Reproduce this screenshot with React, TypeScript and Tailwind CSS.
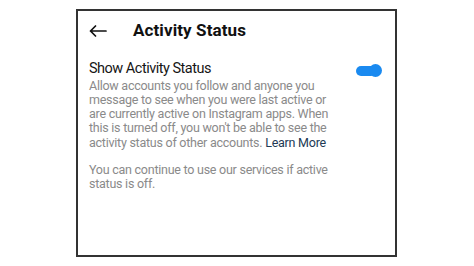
import React from "react";

export default function App() {
  return (
    <div className="h-[266px] w-[474px] bg-white font-['Roboto',sans-serif]">
      <div className="ml-[76px] pt-[9px]">
        <div className="flex h-[248px] w-[321px] flex-col border-2 border-[#333333] pl-[11px] pr-[12px]">
          <div className="flex h-[38px] items-center pt-[1px]">
            <svg width="18" height="12" viewBox="0 0 18 12" fill="none" className="shrink-0">
              <path
                d="M17 6H1.5M6.5 1L1.5 6L6.5 11"
                stroke="#111111"
                strokeWidth="1.7"
                strokeLinecap="round"
                strokeLinejoin="round"
              />
            </svg>
            <h1 className="ml-[26px] text-[17px] font-bold tracking-[0.1px] text-[#111111]">
              Activity Status
            </h1>
          </div>

          <div className="mt-[11px] flex items-start justify-between">
            <div className="w-[250px]">
              <p className="text-[14.5px] leading-[18px] tracking-[-0.5px] text-[#161616]">
                Show Activity Status
              </p>
              <p className="mt-[1px] text-[12.5px] leading-[14px] tracking-[-0.25px] text-[#8a8a8a]">
                <span className="block whitespace-nowrap">Allow accounts you follow and anyone you</span>
                <span className="block whitespace-nowrap">message to see when you were last active or</span>
                <span className="block whitespace-nowrap">are currently active on Instagram apps. When</span>
                <span className="block whitespace-nowrap">this is turned off, you won't be able to see the</span>
                <span className="mt-[1px] block whitespace-nowrap">
                  activity status of other accounts.{" "}
                  <span className="text-[#223a55]">Learn More</span>
                </span>
              </p>
              <p className="mt-[13px] text-[12.5px] leading-[14px] tracking-[-0.25px] text-[#8a8a8a]">
                <span className="block whitespace-nowrap">You can continue to use our services if active</span>
                <span className="block whitespace-nowrap">status is off.</span>
              </p>
            </div>

            <div className="relative mr-[1px] mt-[4px] h-[13px] w-[26px] shrink-0">
              <div className="absolute left-0 top-[2px] h-[10px] w-[20px] rounded-full bg-[#1a8af0]" />
              <div className="absolute right-0 top-0 h-[13px] w-[13px] rounded-full bg-[#1a8af0]" />
            </div>
          </div>
        </div>
      </div>
    </div>
  );
}
